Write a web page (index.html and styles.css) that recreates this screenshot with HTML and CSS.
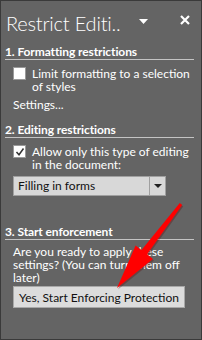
FILE: index.html
```html
<!DOCTYPE html>
<html lang="en">
<head>
    <meta charset="UTF-8">
    <title>Restrict Editing</title>
    <link rel="stylesheet" href="styles.css">
</head>
<body>
    <div class="pane">
        <div class="header">
            <span class="title">Restrict Editi..</span>
            <svg class="caret" width="9" height="5" viewBox="0 0 9 5"><path d="M0 0h9L4.5 5z" fill="#fff"/></svg>
            <svg class="close" width="10" height="10" viewBox="0 0 10 10"><path d="M1 1l8 8M9 1l-8 8" stroke="#fff" stroke-width="2.2"/></svg>
        </div>

        <div class="group">
            <p class="head">1. Formatting restrictions</p>
            <div class="check">
                <span class="box"></span>
                <span>Limit formatting to a selection of styles</span>
            </div>
            <p class="link">Settings...</p>
        </div>

        <div class="group">
            <p class="head">2. Editing restrictions</p>
            <div class="check">
                <span class="box">
                    <svg width="10" height="10" viewBox="0 0 10 10"><path d="M1.5 5l2.5 2.8 4.5-6.3" stroke="#333" stroke-width="1.5" fill="none"/></svg>
                </span>
                <span>Allow only this type of editing in the document:</span>
            </div>
            <div class="select">
                <span class="value">Filling in forms</span>
                <span class="drop"><svg width="8" height="4" viewBox="0 0 8 4"><path d="M0 0h8L4 4z" fill="#222"/></svg></span>
            </div>
        </div>

        <div class="group">
            <p class="head">3. Start enforcement</p>
            <p class="text">Are you ready to apply these settings? (You can turn them off later)</p>
            <button class="btn">Yes, Start Enforcing Protection</button>
        </div>

        <svg class="arrow" width="202" height="340" viewBox="0 0 202 340">
            <path d="M179.8 203.1 L182.2 204.9 L147.1 254.3 L153 258.9 L117 288 L135.6 245.5 L141.5 250.1 Z" fill="#600" opacity=".3" transform="translate(1,1.5)"/>
            <path d="M179.8 203.1 L182.2 204.9 L147.1 254.3 L153 258.9 L117 288 L135.6 245.5 L141.5 250.1 Z" fill="#ff0000"/>
        </svg>
    </div>
</body>
</html>
```

FILE: styles.css
```css
body{
    margin: 0;
    background-color: #646464;
}
.pane{
    position: relative;
    width: 200px;
    height: 338px;
    border: 1px solid #3a3a3a;
    background-color: #646464;
    color: #fff;
    font-family: Lato, "Noto Sans", sans-serif;
    font-size: 12px;
    overflow: hidden;
}
.header{
    display: flex;
    align-items: center;
    height: 43px;
    padding-left: 5px;
}
.title{
    font-size: 20px;
    font-weight: 300;
    letter-spacing: -.2px;
    line-height: 24px;
    width: 133px;
    white-space: nowrap;
}
.caret{
    margin-top: -3px;
}
.close{
    margin-left: 32px;
    margin-top: -6px;
}

.group{
    padding: 0 7px 0 4px;
}
.head{
    margin: 0;
    font-weight: 700;
    font-size: 12px;
    letter-spacing: -.1px;
    line-height: 15px;
    border-bottom: 1px solid #c4c4c4;
}
.check{
    display: flex;
    align-items: flex-start;
    margin: 7px 0 0 8px;
    line-height: 13px;
}
.box{
    flex: none;
    width: 11px;
    height: 11px;
    margin: 0 6px 0 0;
    background-color: #fff;
    border: 1px solid #9a9a9a;
    display: flex;
    align-items: center;
    justify-content: center;
}
.link{
    margin: 5px 0 11px 8px;
    line-height: 13px;
}
.select{
    display: flex;
    margin: 5px 28px 28px 8px;
    height: 18px;
    border: 1px solid #a0a0a0;
    background-color: #d8d8d8;
    color: #111;
}
.value{
    flex: 1;
    padding-left: 4px;
    line-height: 18px;
}
.drop{
    width: 15px;
    border-left: 1px solid #a0a0a0;
    display: flex;
    align-items: center;
    justify-content: center;
}
.text{
    margin: 5px 0 0 8px;
    line-height: 13px;
}
.btn{
    display: block;
    margin: 2px 0 0 8px;
    width: 172px;
    height: 22px;
    padding: 0;
    border: 1px solid #a8a8a8;
    background-color: #dcdcdc;
    color: #111;
    font-family: Lato, "Noto Sans", sans-serif;
    font-size: 12px;
}
.arrow{
    position: absolute;
    left: -1px;
    top: -1px;
}
```
